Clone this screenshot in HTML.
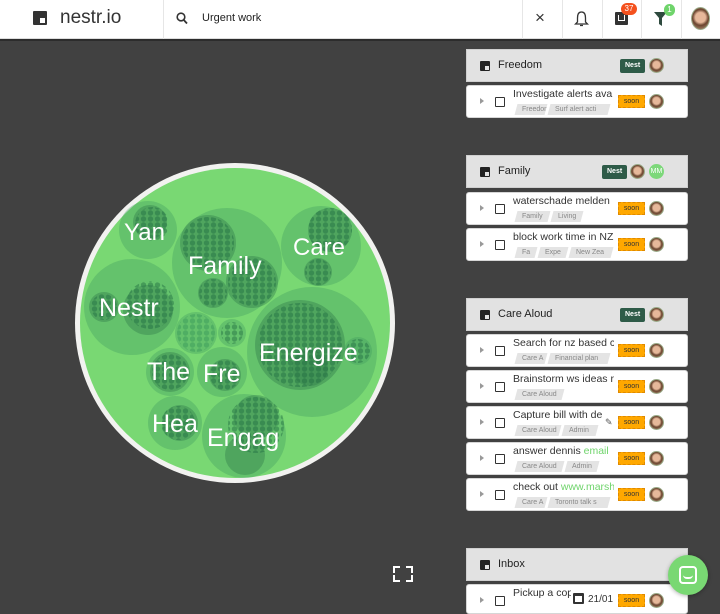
<!DOCTYPE html>
<html><head><meta charset="utf-8"><style>
*{box-sizing:border-box;margin:0;padding:0}
body{width:720px;height:606px;overflow:hidden;background:#414141;font-family:"Liberation Sans",sans-serif;position:relative}
.top{position:absolute;left:0;top:0;width:720px;height:39px;background:#fff;border-bottom:1px solid #ddd}
.sep{position:absolute;top:0;width:1px;height:39px;background:#e6e6e6}
.hdr{position:absolute;left:466px;width:222px;height:33px;background:#e2e2e2;border:1px solid #cfcfcf}
.hdr .ic{position:absolute;left:13px;top:11px;width:10px;height:10px;background:#222;border-radius:1px}
.hdr .ic:after{content:"";position:absolute;right:1px;bottom:1px;width:4px;height:4px;background:#e2e2e2}
.hdr .t{position:absolute;left:31px;top:9px;font-size:11px;color:#222}
.nest{position:absolute;top:9px;height:14px;padding:0 5px;background:#2e5b48;color:#fff;font-size:7px;line-height:14px;border-radius:2px;font-weight:bold}
.av{position:absolute;width:15px;height:15px;border-radius:50%;background:radial-gradient(circle at 50% 45%,#e6b89a 0 35%,#6b4630 55%,#b89a80 100%);border:1px solid #9a8;}
.card{position:absolute;left:466px;width:222px;height:33px;background:#fff;border-radius:3px;border:1px solid #d6d6d6}
.card .ar{position:absolute;left:13px;top:12px;width:0;height:0;border-left:4px solid #999;border-top:3px solid transparent;border-bottom:3px solid transparent}
.card .cb{position:absolute;left:28px;top:11px;width:10px;height:10px;border:1.5px solid #333;border-radius:1px}
.card .tt{position:absolute;left:46px;top:2px;width:101px;overflow:hidden;white-space:nowrap;font-size:10.5px;color:#333}
.card .tags{position:absolute;left:49px;top:18px;white-space:nowrap;font-size:7px;color:#888}
.tag{display:inline-block;background:#e4e4e4;padding:0 6px;height:11px;line-height:11px;margin-right:3px;transform:skewX(-15deg);overflow:hidden;vertical-align:top}
.tag span{display:inline-block;transform:skewX(15deg)}
.soon{position:absolute;left:151px;top:9px;width:27px;height:13px;background:#ffa800;border:1px dashed #e08a00;font-size:7px;line-height:11px;text-align:center;color:#333}
.card .av{left:182px;top:8px}
.green{color:#6fd46b}
</style></head><body>
<div class="top">
  <div style="position:absolute;left:33px;top:11px;width:14px;height:14px;background:#333;border-radius:1px"><div style="position:absolute;right:2px;bottom:2px;width:5px;height:5px;background:#fff"></div></div>
  <div style="position:absolute;left:60px;top:7px;font-size:19px;color:#333">nestr.io</div>
  <div class="sep" style="left:163px"></div>
  <svg style="position:absolute;left:176px;top:12px" width="12" height="13" viewBox="0 0 12 13"><circle cx="5" cy="5" r="3.8" fill="none" stroke="#333" stroke-width="1.6"/><path d="M7.8 8 L11 11.5" stroke="#333" stroke-width="1.8"/></svg>
  <div style="position:absolute;left:202px;top:12px;font-size:11px;color:#222">Urgent work</div>
  <div style="position:absolute;left:535px;top:8px;font-size:17px;color:#333">×</div>
  <div class="sep" style="left:522px"></div><div class="sep" style="left:562px"></div><div class="sep" style="left:602px"></div><div class="sep" style="left:641px"></div><div class="sep" style="left:681px"></div>
  <svg style="position:absolute;left:574px;top:10px" width="15" height="18" viewBox="0 0 15 18"><path d="M7.5 2 C4 2 3.5 5 3.5 8 L3.5 12 L1.5 14 L13.5 14 L11.5 12 L11.5 8 C11.5 5 11 2 7.5 2Z M6 15.5 L9 15.5" fill="none" stroke="#333" stroke-width="1.3"/></svg>
  <div style="position:absolute;left:615px;top:12px;width:13px;height:13px;background:#333;border-radius:1px"><div style="position:absolute;left:3px;top:3px;width:7px;height:6px;border:1.5px solid #fff;border-top:none"></div></div>
  <div style="position:absolute;left:621px;top:3px;width:16px;height:12px;border-radius:6px;background:#f4511e;color:#fff;font-size:8px;text-align:center;line-height:12px">37</div>
  <svg style="position:absolute;left:654px;top:12px" width="13" height="14" viewBox="0 0 13 14"><path d="M0 0 L13 0 L8 6 L8 14 L5 12 L5 6Z" fill="#2e4a3e"/></svg>
  <div style="position:absolute;left:664px;top:4px;width:11px;height:12px;border-radius:6px;background:#6fd46b;color:#fff;font-size:8px;text-align:center;line-height:12px">1</div>
  <div class="av" style="left:691px;top:7px;width:19px;height:23px"></div>
</div>
<div style="position:absolute;left:0;top:39px;width:720px;height:2px;background:#2c2c2c"></div>

<svg style="position:absolute;left:0;top:0" width="460" height="606">
<defs>
<pattern id="d" width="7" height="6" patternUnits="userSpaceOnUse"><circle cx="3.5" cy="3" r="2.7" fill="#1f6a40" fill-opacity="0.45"/></pattern>
<pattern id="d2" width="7" height="6" patternUnits="userSpaceOnUse"><circle cx="3.5" cy="3" r="2.7" fill="#3a9a5a" fill-opacity="0.5"/></pattern>
</defs>
<circle cx="235" cy="323" r="160" fill="#f2f2f0"/>
<circle cx="235" cy="323" r="155" fill="#79d873"/>
<g fill="#3f9a5e" fill-opacity="0.35">
<circle cx="148" cy="230" r="29"/><circle cx="227" cy="263" r="55"/><circle cx="321" cy="246" r="40"/>
<circle cx="132" cy="307" r="48"/><circle cx="196" cy="333" r="21"/><circle cx="232" cy="333" r="14"/>
<circle cx="312" cy="352" r="65"/><circle cx="170" cy="372" r="24"/><circle cx="222" cy="372" r="25"/>
<circle cx="175" cy="423" r="27"/><circle cx="244" cy="436" r="42"/><circle cx="358" cy="351" r="14"/>
</g>
<g fill="#2f7a4c" fill-opacity="0.4">
<circle cx="300" cy="345" r="45"/><circle cx="208" cy="243" r="28"/><circle cx="252" cy="282" r="26"/>
<circle cx="330" cy="230" r="22"/><circle cx="148" cy="310" r="25"/><circle cx="104" cy="307" r="15"/>
<circle cx="170" cy="372" r="20"/><circle cx="256" cy="417" r="22"/><circle cx="213" cy="293" r="15"/>
<circle cx="318" cy="272" r="14"/><circle cx="180" cy="423" r="18"/><circle cx="225" cy="375" r="16"/>
<circle cx="150" cy="222" r="17"/><circle cx="310" cy="368" r="18"/><circle cx="245" cy="455" r="20"/>
</g>
<g fill="url(#d)">
<circle cx="300" cy="345" r="42"/><circle cx="208" cy="243" r="26"/><circle cx="252" cy="282" r="24"/>
<circle cx="330" cy="230" r="22"/><circle cx="150" cy="305" r="24"/><circle cx="104" cy="307" r="13"/>
<circle cx="170" cy="372" r="18"/><circle cx="256" cy="425" r="28"/><circle cx="213" cy="293" r="14"/>
<circle cx="318" cy="272" r="13"/><circle cx="178" cy="423" r="17"/><circle cx="225" cy="375" r="15"/>
<circle cx="152" cy="224" r="17"/><circle cx="358" cy="351" r="12"/><circle cx="232" cy="333" r="11"/>
</g>
<circle cx="196" cy="333" r="19" fill="url(#d2)"/>
<g fill="#fff" font-family="Liberation Sans,sans-serif">
<text x="124" y="240" font-size="24">Yan</text>
<text x="188" y="274" font-size="25">Family</text>
<text x="293" y="255" font-size="24">Care</text>
<text x="99" y="316" font-size="25">Nestr</text>
<text x="259" y="361" font-size="25">Energize</text>
<text x="147" y="380" font-size="25">The</text>
<text x="203" y="382" font-size="25">Fre</text>
<text x="152" y="432" font-size="25">Hea</text>
<text x="207" y="446" font-size="25">Engag</text>
</g>
<g stroke="#fff" stroke-width="2" fill="none"><path d="M394 573 V567 H400 M406 567 H412 V573 M412 575 V581 H406 M400 581 H394 V575"/></g>
</svg>

<!-- Freedom -->
<div class="hdr" style="top:49px"><div class="ic"></div><div class="t">Freedom</div><div class="nest" style="left:153px">Nest</div><div class="av" style="left:182px;top:8px"></div></div>
<div class="card" style="top:85px"><div class="ar"></div><div class="cb"></div><div class="tt">Investigate alerts ava</div><div class="tags"><span class="tag" style="width:30px"><span>Freedom</span></span><span class="tag" style="width:60px"><span>Surf alert acti</span></span></div><div class="soon">soon</div><div class="av"></div></div>

<!-- Family -->
<div class="hdr" style="top:155px"><div class="ic"></div><div class="t">Family</div><div class="nest" style="left:135px">Nest</div><div class="av" style="left:163px;top:8px"></div><div class="av" style="left:182px;top:8px;background:#7dd87a;border:none;color:#fff;font-size:7px;text-align:center;line-height:15px">MM</div></div>
<div class="card" style="top:192px"><div class="ar"></div><div class="cb"></div><div class="tt">waterschade melden</div><div class="tags"><span class="tag"><span>Family</span></span><span class="tag"><span>Living</span></span></div><div class="soon">soon</div><div class="av"></div></div>
<div class="card" style="top:228px"><div class="ar"></div><div class="cb"></div><div class="tt">block work time in NZ</div><div class="tags"><span class="tag" style="width:20px"><span>Fa</span></span><span class="tag" style="width:28px"><span>Expe</span></span><span class="tag" style="width:42px"><span>New Zea</span></span></div><div class="soon">soon</div><div class="av"></div></div>

<!-- Care Aloud -->
<div class="hdr" style="top:298px"><div class="ic"></div><div class="t">Care Aloud</div><div class="nest" style="left:153px">Nest</div><div class="av" style="left:182px;top:8px"></div></div>
<div class="card" style="top:334px"><div class="ar"></div><div class="cb"></div><div class="tt">Search for nz based c</div><div class="tags"><span class="tag" style="width:30px"><span>Care A</span></span><span class="tag" style="width:60px"><span>Financial plan</span></span></div><div class="soon">soon</div><div class="av"></div></div>
<div class="card" style="top:370px"><div class="ar"></div><div class="cb"></div><div class="tt">Brainstorm ws ideas r</div><div class="tags"><span class="tag"><span>Care Aloud</span></span></div><div class="soon">soon</div><div class="av"></div></div>
<div class="card" style="top:406px"><div class="ar"></div><div class="cb"></div><div class="tt" style="width:90px">Capture bill with de</div><div style="position:absolute;left:138px;top:10px;font-size:9px;color:#555">✎</div><div class="tags"><span class="tag" style="width:44px"><span>Care Aloud</span></span><span class="tag" style="width:34px"><span>Admin</span></span></div><div class="soon">soon</div><div class="av"></div></div>
<div class="card" style="top:442px"><div class="ar"></div><div class="cb"></div><div class="tt">answer dennis <span class="green">email</span></div><div class="tags"><span class="tag"><span>Care Aloud</span></span><span class="tag"><span>Admin</span></span></div><div class="soon">soon</div><div class="av"></div></div>
<div class="card" style="top:478px"><div class="ar"></div><div class="cb"></div><div class="tt">check out <span class="green">www.marshall</span></div><div class="tags"><span class="tag" style="width:30px"><span>Care A</span></span><span class="tag" style="width:60px"><span>Toronto talk s</span></span></div><div class="soon">soon</div><div class="av"></div></div>

<!-- Inbox -->
<div class="hdr" style="top:548px"><div class="ic"></div><div class="t">Inbox</div></div>
<div class="card" style="top:584px;height:30px"><div class="ar"></div><div class="cb"></div><div class="tt" style="width:58px">Pickup a copy</div><div style="position:absolute;left:106px;top:8px;width:11px;height:11px;background:#333;border-radius:1px"><div style="position:absolute;left:2px;top:3px;width:7px;height:6px;background:#fff"></div></div><div style="position:absolute;left:121px;top:9px;font-size:10px;color:#333">21/01</div><div class="soon">soon</div><div class="av"></div></div>

<div style="position:absolute;left:668px;top:555px;width:40px;height:40px;border-radius:50%;background:#79d873;box-shadow:0 1px 4px rgba(0,0,0,.3)">
  <div style="position:absolute;left:11px;top:11px;width:18px;height:18px;border:2px solid #fff;border-radius:4px"></div>
  <div style="position:absolute;left:15px;top:20px;width:10px;height:4px;border-bottom:2px solid #fff;border-radius:0 0 5px 5px"></div>
</div>
</body></html>
